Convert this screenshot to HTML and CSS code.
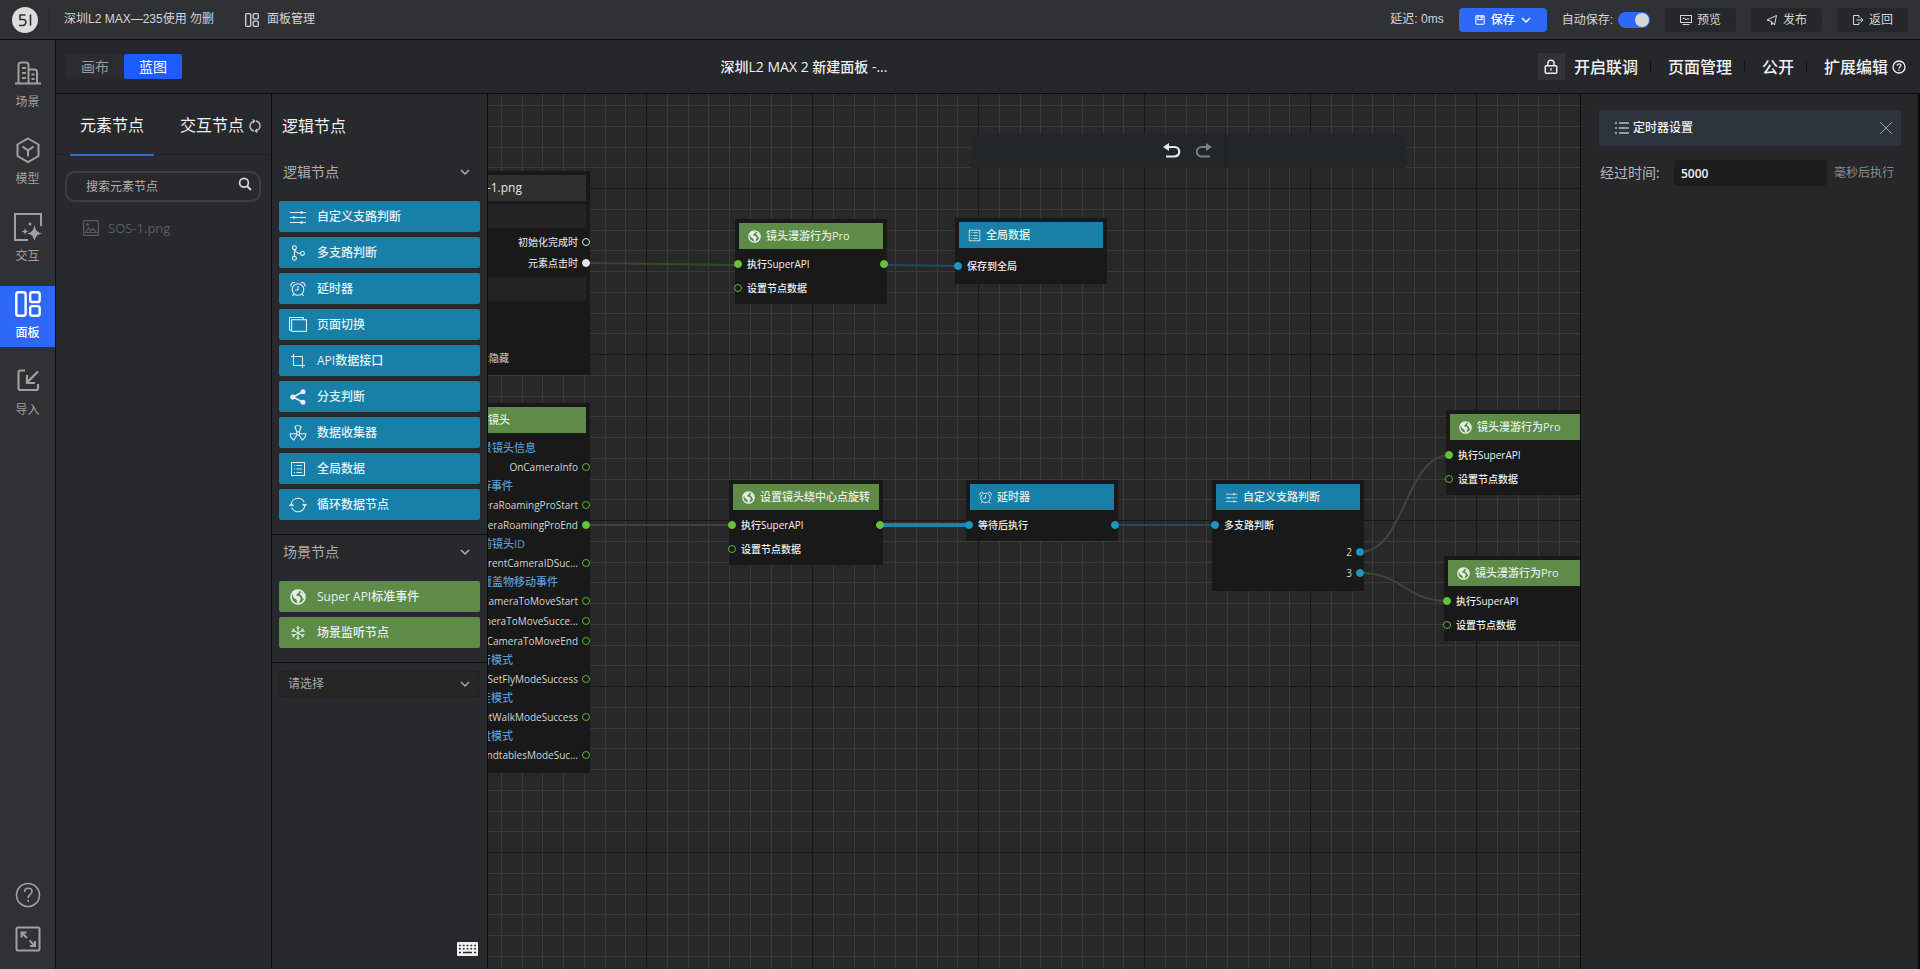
FILE: index.html
```html
<!DOCTYPE html>
<html lang="zh-CN">
<head>
<meta charset="utf-8">
<title>面板管理</title>
<link rel="stylesheet" href="styles.css">
</head>
<body>
<svg class="sprite" aria-hidden="true">
  <symbol id="panels" viewBox="0 0 24 24"><g fill="none" stroke="currentColor" stroke-width="2.2"><rect x="1.2" y="1.2" width="8.6" height="21.6" rx="2"/><rect x="14" y="1.2" width="8.8" height="9" rx="2"/><rect x="14" y="14" width="8.8" height="8.8" rx="2"/></g></symbol>
  <symbol id="chevron" viewBox="0 0 10 10"><path d="M1 3l4 4 4-4" fill="none" stroke="currentColor" stroke-width="1.5"/></symbol>
  <symbol id="sliders" viewBox="0 0 18 14"><g fill="none" stroke="currentColor"><path d="M1 2.500h16M1 7.500h16M1 12.500h16"/></g><g fill="currentColor"><circle cx="12.500" cy="2.500" r="1.300"/><circle cx="5" cy="7.500" r="1.300"/><circle cx="12.500" cy="12.500" r="1.300"/></g></symbol>
  <symbol id="branch" viewBox="0 0 16 18"><g fill="none" stroke="currentColor" stroke-width="1.2"><circle cx="4" cy="3" r="2.200"/><circle cx="4" cy="15" r="2.200"/><circle cx="13" cy="9.500" r="2.200"/><path d="M4 5.200v7.600M4.500 5.500c1 2.500 3 4 6.300 4"/></g></symbol>
  <symbol id="clock" viewBox="0 0 16 16"><g fill="none" stroke="currentColor" stroke-width="1.1"><circle cx="8" cy="8.500" r="5.800"/><path d="M8 5v4H5M1 5.500C.3 3 2.500.8 5 1.800M15 5.500c.7-2.500-1.500-4.700-4-3.700M3.800 13L2.500 15M12.200 13l1.300 2"/></g></symbol>
  <symbol id="pages" viewBox="0 0 17 15"><g fill="none" stroke="currentColor"><path d="M2.500 12.500h-2V.5h13v2"/><rect x="2.500" y="2.500" width="14" height="11"/></g></symbol>
  <symbol id="crop" viewBox="0 0 16 16"><g fill="none" stroke="currentColor"><path d="M3.500 1v11.500H15M1 3.500h11.500V15"/></g></symbol>
  <symbol id="share" viewBox="0 0 16 16"><g fill="currentColor"><circle cx="2.800" cy="8" r="2.600"/><circle cx="13" cy="2.800" r="2.500"/><circle cx="13" cy="13.200" r="2.500"/></g><path d="M13 2.800L3 8l10 5.200" fill="none" stroke="currentColor" stroke-width="1.600"/></symbol>
  <symbol id="fan" viewBox="0 0 18 16"><g fill="none" stroke="currentColor" stroke-width="1.1"><circle cx="9" cy="8.500" r="1.600"/><path d="M8 7L5.800 1.800C7.500.4 10.500.4 12.200 1.800L10 7M7.300 8.800H1.200c0 2.700 1.300 4.800 3.600 6.200l3-5M10.700 8.800h6.100c0 2.700-1.300 4.800-3.600 6.200l-3-5"/></g></symbol>
  <symbol id="list" viewBox="0 0 14 16"><g fill="none" stroke="currentColor"><rect x=".5" y="1.500" width="13" height="13"/><path d="M3 4.500h1M5.500 4.500H11M3 8h1M5.500 8H11M3 11.500h1M5.500 11.500H11"/></g></symbol>
  <symbol id="loop" viewBox="0 0 18 16"><g fill="none" stroke="currentColor" stroke-width="1.1"><path d="M2.300 9A6.800 6.800 0 0 1 15.200 5.200M15.700 7A6.800 6.800 0 0 1 2.800 10.800M.3 9l2-2.200L4.500 9M13.500 7l2.200 2.200L17.800 7"/></g></symbol>
  <symbol id="globe" viewBox="0 0 16 16"><circle cx="8" cy="8" r="7" fill="none" stroke="currentColor" stroke-width="1.600"/><path d="M2 4l2-2.500h5.500L8.500 4 6.500 5l.2 2H9l1.800 2.500-1.600 4-1.700 1.200L6.800 11 3.500 8.500zM11 2.500l3.500 4v3.500l-2-1-.5-2-2-1.500z" fill="currentColor"/></symbol>
  <symbol id="listen" viewBox="0 0 16 16"><g fill="none" stroke="currentColor"><path d="M8 1v14M2 4.500l12 7M14 4.500l-12 7M6.500 2L8 4l1.500-2M6.500 14L8 12l1.500 2M1.500 6.500l3-.5L3.500 3.500M14.500 6.500l-3-.5 1-2.500M1.500 9.500l3 .5-1 2.500M14.500 9.500l-3 .5 1 2.500"/></g></symbol>
</svg>

<header class="topbar">
  <svg class="logo" viewBox="0 0 26 26" role="img" aria-label="51"><circle cx="13" cy="13" r="13" fill="#dcdcdc"/><path d="M13.500 8H8v4.500h3c4.500 0 3.500 6-.5 6H7M18.500 7.500v11" fill="none" stroke="#2f3034" stroke-width="1.600"/></svg>
  <span class="topbar-line"></span>
  <span class="project">深圳L2 MAX—235使用 勿删</span>
  <svg class="i14"><use href="#panels"/></svg>
  <span class="crumb">面板管理</span>
  <div class="actions">
    <span class="delay">延迟: 0ms</span>
    <button class="btn btn-save" type="button">
      <svg class="i10" viewBox="0 0 12 12"><g fill="none" stroke="currentColor" stroke-width="1.300"><rect x="1" y="1" width="10" height="10" rx="1"/><path d="M3.500 1v4.500h5V1M7 2v2"/></g></svg>
      保存
      <svg class="i10"><use href="#chevron"/></svg>
    </button>
    <label class="auto">自动保存:<input class="switch" type="checkbox" role="switch" checked></label>
    <button class="btn" type="button"><svg class="i12" viewBox="0 0 12 12"><g fill="none" stroke="currentColor"><rect x=".5" y="1.500" width="11" height="7"/><path d="M2.500 10.500h7M2.500 5l2-1 1.500 2 2-1.500 1.500 1"/></g></svg>预览</button>
    <button class="btn" type="button"><svg class="i12" viewBox="0 0 12 12"><path d="M1 6l9.500-4.500L8.500 11 5.500 7.500zM5.500 7.500V11l1.500-2" fill="none" stroke="currentColor"/></svg>发布</button>
    <button class="btn" type="button"><svg class="i12" viewBox="0 0 12 12"><path d="M7 4V1.500H1.500v9H7V8M4.500 6H11M8.700 3.700L11 6 8.700 8.300" fill="none" stroke="currentColor"/></svg>返回</button>
  </div>
</header>

<div class="shell">
  <nav class="rail">
    <a class="rail-item" href="#"><svg viewBox="0 0 28 28"><g fill="none" stroke="currentColor" stroke-width="2"><path d="M1 24.500h26M4.500 24V6c0-1.500 1-2.500 2.500-2.500h5c1.500 0 2.500 1 2.500 2.500v18M15 10.500h5.500c1.500 0 2.500 1 2.500 2.500v11M8 9h4M8 14h4M8 19h4M17.500 15.500h3M17.500 20h3"/></g></svg><span>场景</span></a>
    <a class="rail-item" href="#"><svg viewBox="0 0 28 28"><g fill="none" stroke="currentColor" stroke-width="2"><path d="M14 2.500l10.500 6v11.500L14 26 3.500 20V8.500zM8.500 10.500l5.500 4 5.500-4M14 14.500v6"/></g></svg><span>模型</span></a>
    <a class="rail-item" href="#"><svg viewBox="0 0 28 28"><path d="M27 13V1H1v26h13" fill="none" stroke="currentColor" stroke-width="2"/><path d="M20.500 12c1.300 6 2.500 7.200 7.500 8.500-5 1.300-6.200 2.500-7.500 7.500-1.300-5-2.500-6.200-7.500-7.500 5-1.300 6.200-2.500 7.500-8.500zM11 15c.5 2.500 1 3 3.500 3.500-2.500.5-3 1-3.500 3.500-.5-2.500-1-3-3.500-3.500 2.500-.5 3-1 3.500-3.500z" fill="currentColor"/><circle cx="16" cy="11" r="1.500" fill="currentColor"/></svg><span>交互</span></a>
    <a class="rail-item active" href="#"><svg class="i24"><use href="#panels"/></svg><span>面板</span></a>
    <a class="rail-item" href="#"><svg viewBox="0 0 28 28"><g fill="none" stroke="currentColor" stroke-width="2.200"><path d="M11 3.500H6.500a2 2 0 0 0-2 2V21a2 2 0 0 0 2 2h15.500a2 2 0 0 0 2-2v-4M24 4.500L13 15.500M13 8v8h8"/></g></svg><span>导入</span></a>
    <div class="rail-bottom">
      <button class="icon-btn" type="button" aria-label="帮助"><svg viewBox="0 0 28 28"><g fill="none" stroke="currentColor" stroke-width="1.600"><circle cx="14" cy="14" r="11.500"/><path d="M10.500 11c0-5 7.500-5 7.500-.5 0 3-3.800 3-3.800 6.500M14.200 18.700v2"/></g></svg></button>
      <button class="icon-btn" type="button" aria-label="全屏"><svg viewBox="0 0 28 28"><g fill="none" stroke="currentColor" stroke-width="2"><rect x="2.500" y="2.500" width="23" height="23" rx="1.500"/><path d="M7.500 12.500V7.500h5M7.500 7.500l5.500 5.500M21 16v5h-5M21 21l-5.500-5.500"/></g></svg></button>
    </div>
  </nav>

  <div class="workspace">
    <div class="subbar">
      <div class="modes">
        <button class="mode" type="button">画布</button>
        <button class="mode mode-on" type="button">蓝图</button>
      </div>
      <h1 class="doc-title">深圳L2 MAX 2 新建面板 -...</h1>
      <div class="links">
        <button class="lock" type="button" aria-label="锁定"><svg class="i16" viewBox="0 0 16 18"><g fill="none" stroke="currentColor" stroke-width="1.600"><rect x="1.500" y="7.500" width="13" height="8.500" rx="1"/><path d="M4.500 7.500V5c0-4.700 7-4.700 7 0v2.500M8 10.500v2.500"/></g></svg></button>
        <a class="link link-first" href="#">开启联调</a>
        <a class="link" href="#">页面管理</a>
        <a class="link" href="#">公开</a>
        <a class="link" href="#">扩展编辑<svg class="i14" viewBox="0 0 14 14"><g fill="none" stroke="currentColor" stroke-width="1.300"><circle cx="7" cy="7" r="6"/><path d="M5.200 5.800c0-2.600 3.700-2.600 3.700-.3C8.900 7 7 6.900 7 8.500M7 9.500V11"/></g></svg></a>
      </div>
    </div>

    <div class="columns">
      <section class="panel">
        <div class="tabs">
          <button class="tab tab-on" type="button">元素节点</button>
          <button class="tab" type="button">交互节点</button>
          <svg class="i14 refresh" viewBox="0 0 14 14"><g fill="none" stroke="currentColor" stroke-width="1.400"><path d="M6 12A5 5 0 0 1 3.500 3.500L6 2M8 2a5 5 0 0 1 2.500 8.500L8 12M4.500.5L6.500 2 5 4M9.500 13.500L7.500 12 9 10"/></g></svg>
        </div>
        <label class="search">
          <input type="search" placeholder="搜索元素节点" aria-label="搜索元素节点">
          <svg class="i14" viewBox="0 0 14 14"><path d="M9 9l4 4" stroke="currentColor" stroke-width="2"/><circle cx="6" cy="5.700" r="4.400" fill="none" stroke="currentColor" stroke-width="1.700"/></svg>
        </label>
        <div class="file"><svg class="i16" viewBox="0 0 16 16"><g fill="none" stroke="currentColor" stroke-width="1.200"><rect x=".6" y=".6" width="14.800" height="14.800" rx="1"/><path d="M2.500 12.500l3-4.500 2.500 3 2-2.500 3.500 4z"/><circle cx="4.500" cy="4.500" r="1"/></g></svg>SOS-1.png</div>
      </section>

      <section class="panel">
        <h2 class="panel-title">逻辑节点</h2>
        <div class="group">
          <button class="group-head" type="button">逻辑节点<svg class="i10"><use href="#chevron"/></svg></button>
          <button class="item blue" type="button"><svg><use href="#sliders"/></svg>自定义支路判断</button>
          <button class="item blue" type="button"><svg><use href="#branch"/></svg>多支路判断</button>
          <button class="item blue" type="button"><svg><use href="#clock"/></svg>延时器</button>
          <button class="item blue" type="button"><svg><use href="#pages"/></svg>页面切换</button>
          <button class="item blue" type="button"><svg><use href="#crop"/></svg>API数据接口</button>
          <button class="item blue" type="button"><svg><use href="#share"/></svg>分支判断</button>
          <button class="item blue" type="button"><svg><use href="#fan"/></svg>数据收集器</button>
          <button class="item blue" type="button"><svg><use href="#list"/></svg>全局数据</button>
          <button class="item blue" type="button"><svg><use href="#loop"/></svg>循环数据节点</button>
        </div>
        <div class="group">
          <button class="group-head" type="button">场景节点<svg class="i10"><use href="#chevron"/></svg></button>
          <button class="item green" type="button"><svg><use href="#globe"/></svg>Super API标准事件</button>
          <button class="item green" type="button"><svg><use href="#listen"/></svg>场景监听节点</button>
        </div>
        <div class="picker">
          <select aria-label="请选择"><option>请选择</option></select>
          <svg class="i10"><use href="#chevron"/></svg>
        </div>
        <button class="keys" type="button" aria-label="快捷键"><svg viewBox="0 0 21 14"><rect width="21" height="14" rx="1" fill="#f0f0f0"/><path d="M2 3.500h17M2 6.800h17" stroke="#28292d" stroke-width="1.600" stroke-dasharray="1.800 2"/><path d="M2 10.500h2M6 10.500h9M17 10.500h2" stroke="#28292d" stroke-width="1.400"/></svg></button>
      </section>

      <main class="canvas">
        <svg class="board" aria-hidden="true">
          <defs>
            <pattern id="grid" x="-8" y="-72" width="166" height="166" patternUnits="userSpaceOnUse">
              <path d="M21.500 0v166M42.500 0v166M62.500 0v166M83.500 0v166M104.500 0v166M125.500 0v166M145.500 0v166M0 21.500h166M0 42.500h166M0 62.500h166M0 83.500h166M0 104.500h166M0 125.500h166M0 145.500h166" stroke="#3a3a3a"/>
              <path d="M.5 0v166M0 .5h166" stroke="#171717"/>
            </pattern>
          </defs>
          <rect width="100%" height="100%" fill="url(#grid)"/>
          <g fill="none">
            <path d="M99 169L250 171M98 431H244" stroke="#35492d" stroke-width="2"/>
            <path d="M396 171L471 172M626 431H727" stroke="#1e4c5f" stroke-width="2"/>
            <path d="M392 431h90" stroke="#1b84ae" stroke-width="4"/>
            <path d="M872 458C917 458 917 361 962 361M872 479C916 479 916 507 960 507" stroke="#3a4a35" stroke-width="2"/>
          </g>
        </svg>

        <article class="node sos">
          <header class="node-head gray">SOS-1.png</header>
          <div class="band"></div>
          <div class="outs">
            <div class="out">初始化完成时<i class="port white"></i></div>
            <div class="out">元素点击时<i class="port white full"></i></div>
          </div>
          <div class="band"></div>
          <div class="state">显示隐藏</div>
        </article>

        <article class="node camera">
          <header class="node-head green">镜头</header>
          <div class="events">
            <h3 style="width:98px">场景镜头信息</h3>
            <div class="out">OnCameraInfo<i class="port"></i></div>
            <h3 style="width:75px">漫游事件</h3>
            <div class="out">OnCameraRoamingProStart<i class="port"></i></div>
            <div class="out">OnCameraRoamingProEnd<i class="port full"></i></div>
            <h3 style="width:87px">当前镜头ID</h3>
            <div class="out">OnCurrentCameraIDSuc...<i class="port"></i></div>
            <h3 style="width:120px">覆盖物移动事件</h3>
            <div class="out">OnCameraToMoveStart<i class="port"></i></div>
            <div class="out">OnCameraToMoveSucce...<i class="port"></i></div>
            <div class="out">OnCameraToMoveEnd<i class="port"></i></div>
            <h3 style="width:75px">飞行模式</h3>
            <div class="out">OnSetFlyModeSuccess<i class="port"></i></div>
            <h3 style="width:75px">行走模式</h3>
            <div class="out">OnSetWalkModeSuccess<i class="port"></i></div>
            <h3 style="width:75px">沙盘模式</h3>
            <div class="out">OnSandtablesModeSuc...<i class="port"></i></div>
          </div>
        </article>

        <article class="node roam-top">
          <header class="node-head green"><svg><use href="#globe"/></svg>镜头漫游行为Pro</header>
          <div class="ins"><div class="in"><i class="port full"></i>执行SuperAPI<i class="port full end"></i></div><div class="in"><i class="port"></i>设置节点数据</div></div>
        </article>
        <article class="node store">
          <header class="node-head blue"><svg><use href="#list"/></svg>全局数据</header>
          <div class="ins"><div class="in"><i class="port cyan full"></i>保存到全局</div></div>
        </article>
        <article class="node rotate">
          <header class="node-head green"><svg><use href="#globe"/></svg>设置镜头绕中心点旋转</header>
          <div class="ins"><div class="in"><i class="port full"></i>执行SuperAPI<i class="port full end"></i></div><div class="in"><i class="port"></i>设置节点数据</div></div>
        </article>
        <article class="node timer">
          <header class="node-head blue"><svg><use href="#clock"/></svg>延时器</header>
          <div class="ins"><div class="in"><i class="port cyan full"></i>等待后执行<i class="port cyan full end"></i></div></div>
        </article>
        <article class="node judge">
          <header class="node-head blue"><svg><use href="#sliders"/></svg>自定义支路判断</header>
          <div class="ins"><div class="in"><i class="port cyan full"></i>多支路判断</div></div>
          <div class="outs"><div class="out">2<i class="port cyan full"></i></div><div class="out">3<i class="port cyan full"></i></div></div>
        </article>
        <article class="node roam-a">
          <header class="node-head green"><svg><use href="#globe"/></svg>镜头漫游行为Pro</header>
          <div class="ins"><div class="in"><i class="port full"></i>执行SuperAPI</div><div class="in"><i class="port"></i>设置节点数据</div></div>
        </article>
        <article class="node roam-b">
          <header class="node-head green"><svg><use href="#globe"/></svg>镜头漫游行为Pro</header>
          <div class="ins"><div class="in"><i class="port full"></i>执行SuperAPI</div><div class="in"><i class="port"></i>设置节点数据</div></div>
        </article>

        <div class="history">
          <div class="history-main">
            <button type="button" aria-label="撤销"><svg viewBox="0 0 18 16"><path d="M4 4h7.500a4.700 4.700 0 0 1 0 9.500H3" fill="none" stroke="#e8e8e8" stroke-width="2.200"/><path d="M0 4l6-4v8z" fill="#e8e8e8"/></svg></button>
            <button type="button" aria-label="重做"><svg viewBox="0 0 18 16"><path d="M13 4H6.500a4.700 4.700 0 0 0 0 9.500H15" fill="none" stroke="#75808a" stroke-width="2"/><path d="M17 4l-6-4v8z" fill="#75808a"/></svg></button>
          </div>
        </div>
      </main>

      <aside class="props">
        <div class="props-head">
          <svg class="i14" viewBox="0 0 14 14"><path d="M4 2h10M4 7h10M4 12h10M0 2h2M0 7h2M0 12h2" stroke="#b8bcc2" stroke-width="1.400"/></svg>
          <h2>定时器设置</h2>
          <button type="button" aria-label="关闭"><svg class="i14" viewBox="0 0 14 14"><path d="M1 1l12 12M13 1L1 13" stroke="#9a9a9a"/></svg></button>
        </div>
        <div class="field">
          <label for="elapsed">经过时间:</label>
          <input id="elapsed" type="text" value="5000">
          <span>毫秒后执行</span>
        </div>
      </aside>
    </div>
  </div>
</div>
</body>
</html>
```
FILE: styles.css
```css
* { box-sizing: border-box; }
html, body { height: 100%; }
body {
  margin: 0;
  display: flex;
  flex-direction: column;
  overflow: hidden;
  background: #28292d;
  color: #d6d6d6;
  font: 12px/16px "Open Sans", "Noto Sans CJK SC", sans-serif;
}
button, input, select { font: inherit; color: inherit; }
button { padding: 0; border: 0; background: none; white-space: nowrap; }
a { color: inherit; text-decoration: none; }
h1, h2, h3 { margin: 0; font-weight: 400; }
svg { flex: none; display: block; }
.sprite { position: absolute; width: 0; height: 0; }
.i10 { width: 10px; height: 10px; }
.i12 { width: 12px; height: 12px; }
.i14 { width: 14px; height: 14px; }
.i16 { width: 16px; height: 16px; }

/* top bar */
.topbar {
  flex: none;
  display: flex;
  align-items: center;
  height: 40px;
  padding: 0 12px;
  background: #303135;
  border-bottom: 1px solid #0c0c0d;
  font-family: "Liberation Sans", "Noto Sans CJK SC", sans-serif;
}
.logo { width: 26px; height: 26px; }
.topbar-line { width: 1px; height: 24px; margin: 0 15px 0 10px; background: #2a2b2e; }
.project, .crumb, .delay { padding-bottom: 2px; }
.crumb { margin-left: 8px; }
.project { margin-right: 31px; }
.actions { display: flex; align-items: center; gap: 15px; margin-left: auto; }
.btn {
  display: flex;
  align-items: center;
  justify-content: center;
  gap: 5px;
  width: 71px;
  height: 24px;
  border-radius: 4px;
  background: #25272a;
}
.btn-save { width: 88px; gap: 6px; background: #2d69f6; color: #fff; font-weight: 500; }
.auto { display: flex; align-items: center; gap: 5px; }
.switch {
  appearance: none;
  display: flex;
  justify-content: flex-end;
  width: 32px;
  height: 16px;
  margin: 0;
  padding: 1px;
  border-radius: 8px;
  background: #2d69f6;
}
.switch::before { content: ""; width: 14px; height: 14px; border-radius: 7px; background: #d6d6d6; }

/* left rail */
.shell { flex: 1; display: flex; min-height: 0; }
.rail {
  flex: none;
  display: flex;
  flex-direction: column;
  gap: 16px;
  width: 56px;
  padding-top: 15px;
  background: #303135;
  border-right: 1px solid #0c0c0d;
  color: #a0a0a0;
}
.rail-item {
  display: flex;
  flex-direction: column;
  align-items: center;
  gap: 7px;
  height: 61px;
  padding-top: 4px;
}
.rail-item svg { width: 28px; height: 28px; }
.rail-item .i24 { width: 26px; height: 28px; }
.active { background: #2d69f6; color: #fff; font-weight: 500; }
.rail-bottom { display: flex; flex-direction: column; align-items: center; gap: 16px; margin-top: auto; padding-bottom: 16px; }
.icon-btn svg { width: 28px; height: 28px; }

/* second bar */
.workspace { flex: 1; display: flex; flex-direction: column; min-width: 0; }
.subbar {
  flex: none;
  display: grid;
  grid-template-columns: 1fr auto 1fr;
  align-items: center;
  height: 54px;
  padding: 0 14px 0 10px;
  background: #26272a;
  border-bottom: 1px solid #0c0c0d;
}
.modes { display: flex; }
.mode { width: 58px; height: 25px; border-radius: 2px; background: #2b2c2f; color: #9a9a9a; font-size: 14px; }
.mode-on { background: #1f5cff; color: #fff; }
.doc-title { margin-right: 364px; color: #f0f0f0; font-size: 14px; line-height: 20px; font-weight: 500; white-space: nowrap; }
.links { display: flex; align-items: center; justify-content: flex-end; color: #f0f0f0; }
.lock { display: grid; place-items: center; width: 27px; height: 27px; margin-right: 9px; background: #303236; }
.link { display: flex; align-items: center; gap: 4px; font-size: 16px; line-height: 20px; font-weight: 500; white-space: nowrap; }
.link + .link::before { content: ""; width: 1px; height: 12px; margin: 0 17px 0 12px; background: #121213; }
.link + .link::before { margin-right: 13px; }

/* node lists */
.columns { flex: 1; display: flex; min-height: 0; }
.panel {
  flex: none;
  display: flex;
  flex-direction: column;
  width: 216px;
  background: #28292d;
  border-right: 1px solid #0c0c0d;
}
.tabs { display: flex; align-items: center; height: 61px; padding: 0 10px 0 14px; border-bottom: 1px solid #202124; }
.tab { flex: none; height: 62px; margin-top: 2px; padding: 2px 10px 0; border-bottom: 2px solid transparent; color: #f0f0f0; font-size: 16px; }
.tab-on { margin-right: 16px; border-bottom-color: #3a67c8; }
.tab + .tab { padding-right: 4px; }
.refresh { color: #c0c0c0; margin-top: 4px; }
.search {
  display: flex;
  align-items: center;
  height: 31px;
  margin: 16px 10px 0 9px;
  padding: 0 7px 0 19px;
  border: 2px solid #3d3e40;
  border-radius: 10px;
}
.search input { flex: 1; min-width: 0; padding: 0; border: 0; outline: 0; background: none; }
.search input::placeholder { color: #b0b0b0; }
.search svg { margin-bottom: 5px; }
.file { display: flex; align-items: center; gap: 9px; margin: 18px 27px; color: #5c5d60; font-size: 13px; }
.panel-title { height: 61px; padding: 20px 10px 0; color: #f0f0f0; font-size: 16px; line-height: 24px; }
.group { display: flex; flex-direction: column; gap: 5px; padding: 0 7px 14px; border-bottom: 1px solid #0c0c0d; }
.group-head {
  display: flex;
  align-items: center;
  justify-content: space-between;
  height: 34px;
  margin-bottom: 7px;
  padding: 0 10px 0 4px;
  color: #aeaeae;
  font-size: 14px;
}
.item { display: flex; align-items: center; gap: 10px; height: 31px; padding-left: 10px; border-radius: 2px; color: #e4f0f4; font-weight: 500; }
.item svg { width: 18px; height: 16px; }
.blue { background: #1880a8; }
.green { background: #5f8b49; }
.picker { display: flex; align-items: center; height: 26px; margin: 8px 7px 0; padding: 0 9px 0 8px; border: 1px solid #222; border-radius: 4px; background: #262627; color: #a8a8a8; }
.picker select { flex: 1; appearance: none; padding: 0; border: 0; background: none; }
.keys { align-self: flex-end; margin: auto 9px 13px 0; }
.keys svg { width: 21px; height: 14px; }

/* blueprint board */
.canvas { position: relative; flex: 1; min-width: 0; overflow: hidden; background: #282828; }
.board { position: absolute; inset: 0; width: 100%; height: 100%; }
.node { position: absolute; width: 152px; padding: 4px 0; background: #191919; color: #f0f0f0; font-size: 10px; line-height: 16px; font-weight: 500; }
.node-head { display: flex; align-items: center; gap: 5px; height: 26px; margin: 0 4px; padding-left: 9px; color: #e4f0e4; font-size: 11px; white-space: nowrap; }
.node-head svg { width: 13px; height: 13px; }
.gray { background: #303030; font-size: 12px; color: #e6e6e6; }
.ins { padding-top: 3px; }
.in { display: flex; align-items: center; gap: 5px; height: 24px; margin: 0 -1px; }
.port { flex: none; width: 8px; height: 8px; border: 1px solid #5cb531; border-radius: 4px; }
.full { background: #67c23a; border-color: #67c23a; }
.cyan { background: #1c95c4; border-color: #1c95c4; }
.white { border-color: #e6e6e6; }
.white.full { background: #e6e6e6; }
.end { margin-left: auto; }
.out { display: flex; align-items: center; justify-content: flex-end; gap: 4px; height: 20px; color: #d4d4d4; white-space: nowrap; }
.outs .out { height: 21px; }
.band { height: 24px; margin: 3px 4px 0; background: #242424; }
.state { padding: 49px 81px 5px 0; text-align: right; color: #b8b8b8; }
.events { padding: 6px 0 4px; }
.events h3 { height: 18px; text-align: right; color: #5b9bcb; font-size: 11px; line-height: 18px; font-weight: 500; white-space: nowrap; }

.sos { left: -50px; top: 77px; }
.sos .node-head { justify-content: flex-end; padding-right: 64px; }
.sos .outs { padding: 3px 0 1px; }
.camera { left: -50px; top: 309px; }
.camera .node-head { justify-content: flex-end; padding-right: 76px; }
.roam-top { left: 247px; top: 125px; }
.store { left: 467px; top: 124px; }
.store .ins { padding: 6px 0 2px; }
.rotate { left: 241px; top: 386px; width: 154px; }
.timer { left: 478px; top: 386px; }
.judge { left: 724px; top: 386px; }
.judge .outs { padding: 4px 0; }
.roam-a { left: 958px; top: 316px; }
.roam-b { left: 956px; top: 462px; }

.history { position: absolute; top: 40px; right: 174px; display: flex; width: 435px; height: 34px; background: #232628; }
.history-main { display: flex; align-items: center; justify-content: flex-end; gap: 14px; width: 255px; padding-right: 12px; border-right: 1px solid #1a1b1c; }
.history svg { width: 18px; height: 16px; }

/* properties */
.props { flex: none; width: 340px; padding: 16px 17px 0 18px; background: #272729; border: solid #0c0c0d; border-width: 0 2px 0 1px; }
.props-head { display: flex; align-items: center; gap: 4px; height: 36px; padding: 0 8px 0 16px; background: #2e343e; }
.props-head h2 { flex: 1; color: #f0f0f0; font-size: 12px; font-weight: 500; }
.field { display: flex; align-items: center; gap: 7px; margin-top: 14px; padding-left: 1px; }
.field label { flex: none; width: 67px; color: #b8b8b8; font-size: 14px; white-space: nowrap; }
.field input { flex: 1; min-width: 0; height: 26px; padding: 0 7px; border: 0; border-radius: 4px; background: #1d1d1d; color: #f4f4f4; font-weight: 600; }
.field span { flex: none; width: 67px; color: #878c92; }
```
